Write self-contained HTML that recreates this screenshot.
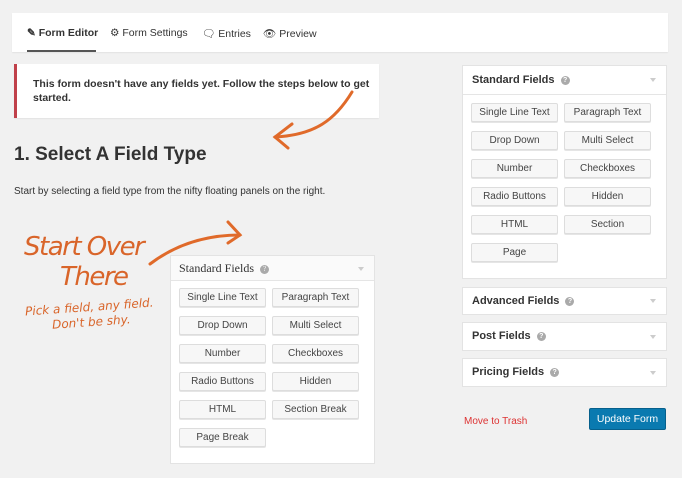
<!DOCTYPE html>
<html><head><style>
body{margin:0;width:682px;height:478px;background:#f1f1f1;font-family:"Liberation Sans",sans-serif;position:relative;overflow:hidden;color:#333}
.abs{position:absolute}
.bar{left:12px;top:13px;width:656px;height:39px;background:#fff;box-shadow:0 1px 1px rgba(0,0,0,.06)}
.tab{top:27px;font-size:10.5px;color:#333}
.notice{left:14px;top:64px;width:362px;height:54px;background:#fff;border-left:3px solid #c0404a;box-shadow:0 1px 1px rgba(0,0,0,.06)}
.notice p{margin:0;padding:13px 0 0 16px;font-size:10.5px;font-weight:bold;line-height:14px;color:#333}
.panel{background:#fff;border:1px solid #e3e3e3;box-sizing:border-box}
.ph{font-size:11px;font-weight:bold;color:#333;padding-left:9px}
.q{display:inline-block;width:9px;height:9px;border-radius:50%;background:#aaa;color:#fff;font-size:7px;line-height:9px;text-align:center;vertical-align:1px;margin-left:3px}
.caret{position:absolute;right:10px;width:0;height:0;border:3px solid transparent;border-top:4px solid #ccc}
.btn{position:absolute;width:87px;height:19px;background:#f7f7f7;border:1px solid #ddd;box-sizing:border-box;border-radius:2px;font-size:10px;text-align:center;line-height:18px;color:#444;box-shadow:0 1px 0 #e5e5e5}
.hand{color:#d9652a;font-family:"DejaVu Sans",sans-serif;font-style:italic}
</style></head><body>
<div class="abs bar"></div>
<div class="abs tab" style="left:27px;font-weight:bold">&#9998; Form Editor</div>
<div class="abs" style="left:27px;top:50px;width:69px;height:2px;background:#555"></div>
<div class="abs tab" style="left:110px">&#9881; Form Settings</div>
<div class="abs tab" style="left:202px">&#128488; Entries</div>
<div class="abs tab" style="left:263px">&#128065; Preview</div>

<div class="abs notice"><p>This form doesn't have any fields yet. Follow the steps below to get started.</p></div>

<div class="abs" style="left:14px;top:144px;font-size:19px;font-weight:bold;color:#333">1. Select A Field Type</div>
<div class="abs" style="left:14px;top:186px;font-size:10px;color:#333">Start by selecting a field type from the nifty floating panels on the right.</div>

<svg class="abs" style="left:0;top:0" width="682" height="478">
<path d="M352 92 C335 120 315 135 275 137" stroke="#e06a2a" stroke-width="3" fill="none" stroke-linecap="round"/>
<path d="M292 124 L275 137 L288 148" stroke="#e06a2a" stroke-width="3" fill="none" stroke-linecap="round"/>
<path d="M150 264 C175 245 205 235 240 235" stroke="#e06a2a" stroke-width="3" fill="none" stroke-linecap="round"/>
<path d="M228 222 L240 235 L228 243" stroke="#e06a2a" stroke-width="3" fill="none" stroke-linecap="round"/>
</svg>
<div class="abs hand" style="left:24px;top:232px;font-size:26px;letter-spacing:-1.5px">Start Over</div>
<div class="abs hand" style="left:60px;top:262px;font-size:26px;letter-spacing:-1.5px">There</div>
<div class="abs hand" style="left:25px;top:300px;font-size:12px;transform:rotate(-4deg)">Pick a field, any field.</div>
<div class="abs hand" style="left:52px;top:315px;font-size:12px;transform:rotate(-4deg)">Don't be shy.</div>

<div class="abs panel" style="left:170px;top:255px;width:205px;height:209px">
<div style="height:24px;border-bottom:1px solid #e5e5e5;background:#fafafa;font-family:'Liberation Serif',serif;font-size:12px;line-height:24px;padding-left:8px">Standard Fields <span class="q">?</span><span class="caret" style="top:11px"></span></div>
</div>
<div class="btn" style="left:179px;top:288px">Single Line Text</div><div class="btn" style="left:272px;top:288px">Paragraph Text</div>
<div class="btn" style="left:179px;top:316px">Drop Down</div><div class="btn" style="left:272px;top:316px">Multi Select</div>
<div class="btn" style="left:179px;top:344px">Number</div><div class="btn" style="left:272px;top:344px">Checkboxes</div>
<div class="btn" style="left:179px;top:372px">Radio Buttons</div><div class="btn" style="left:272px;top:372px">Hidden</div>
<div class="btn" style="left:179px;top:400px">HTML</div><div class="btn" style="left:272px;top:400px">Section Break</div>
<div class="btn" style="left:179px;top:428px">Page Break</div>

<div class="abs panel" style="left:462px;top:65px;width:205px;height:214px">
<div class="ph" style="height:28px;line-height:28px;border-bottom:1px solid #e5e5e5">Standard Fields <span class="q">?</span><span class="caret" style="top:12px"></span></div>
</div>
<div class="btn" style="left:471px;top:103px">Single Line Text</div><div class="btn" style="left:564px;top:103px">Paragraph Text</div>
<div class="btn" style="left:471px;top:131px">Drop Down</div><div class="btn" style="left:564px;top:131px">Multi Select</div>
<div class="btn" style="left:471px;top:159px">Number</div><div class="btn" style="left:564px;top:159px">Checkboxes</div>
<div class="btn" style="left:471px;top:187px">Radio Buttons</div><div class="btn" style="left:564px;top:187px">Hidden</div>
<div class="btn" style="left:471px;top:215px">HTML</div><div class="btn" style="left:564px;top:215px">Section</div>
<div class="btn" style="left:471px;top:243px">Page</div>

<div class="abs panel ph" style="left:462px;top:287px;width:205px;height:28px;line-height:26px">Advanced Fields <span class="q">?</span><span class="caret" style="top:11px"></span></div>
<div class="abs panel ph" style="left:462px;top:322px;width:205px;height:29px;line-height:27px">Post Fields <span class="q">?</span><span class="caret" style="top:12px"></span></div>
<div class="abs panel ph" style="left:462px;top:358px;width:205px;height:29px;line-height:27px">Pricing Fields <span class="q">?</span><span class="caret" style="top:12px"></span></div>

<div class="abs" style="left:464px;top:416px;font-size:10px;color:#d33">Move to Trash</div>
<div class="abs" style="left:589px;top:408px;width:77px;height:22px;background:#0a7ab0;border:1px solid #06608c;box-sizing:border-box;border-radius:2px;color:#fff;font-size:10.5px;text-align:center;line-height:20px">Update Form</div>
</body></html>
